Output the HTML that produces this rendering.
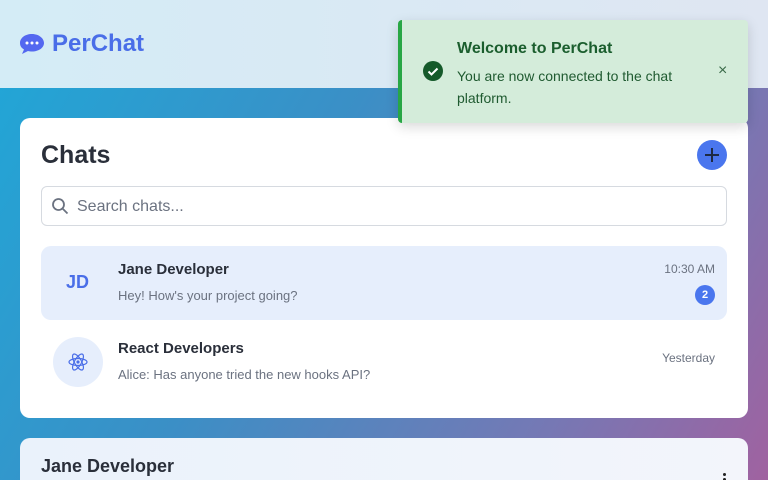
<!DOCTYPE html>
<html style="width:768px;height:480px;overflow:hidden"><head><meta charset="utf-8"><style>
*{box-sizing:border-box;margin:0;padding:0}
body{width:768px;height:480px;overflow:hidden;font-family:"Liberation Sans",sans-serif;background:linear-gradient(120deg,#1fa8d8 0%,#3b8fc6 40%,#7479b5 75%,#a062a0 100%);position:relative}
.hdr{position:absolute;left:0;top:0;width:768px;height:88px;background:linear-gradient(90deg,#d4ecf6,#dfe6f2);}
.logo{position:absolute;left:19px;top:30px;display:flex;align-items:center;color:#4a6ee8;font-weight:bold;font-size:24px}
.card{position:absolute;left:20px;top:118px;width:728px;height:300px;background:#fff;border-radius:10px}
h1{position:absolute;left:21px;top:23px;font-size:25px;color:#2a2f3a}
.plus{position:absolute;left:677px;top:22px;width:30px;height:30px;border-radius:50%;background:#4a76ee}
.search{position:absolute;left:21px;top:68px;width:686px;height:40px;border:1px solid #d6dae0;border-radius:6px;font-size:16px;color:#6b7280;padding:11px 0 0 35px}
.row{position:absolute;left:21px;width:686px;height:74px;border-radius:10px}
.nm{position:absolute;left:77px;font-weight:bold;font-size:15px;color:#2a2f3a}
.msg{position:absolute;left:77px;font-size:13px;color:#6b7280}
.tm{position:absolute;right:12px;font-size:12px;color:#6b7280}
.toast{position:absolute;left:398px;top:20px;width:350px;height:103px;background:#d4ecda;border-left:4px solid #28a745;border-radius:4px;box-shadow:0 4px 12px rgba(0,0,0,.15)}
.bot{position:absolute;left:20px;top:438px;width:728px;height:42px;background:linear-gradient(90deg,#eaf2fb,#f3f5fb);border-radius:10px 10px 0 0;overflow:hidden}
</style></head><body>
<div class="hdr"><div class="logo"><svg width="26" height="22" viewBox="0 0 26 22" style="margin-right:7px"><path d="M13 1C6 1 1 5 1 10c0 3 1.5 5 4 6.5L3 21l6-3c1.2.3 2.6.5 4 .5 7 0 12-4 12-8.5S20 1 13 1z" fill="#5468f0"/><circle cx="8" cy="10" r="1.5" fill="#fff"/><circle cx="13" cy="10" r="1.5" fill="#fff"/><circle cx="18" cy="10" r="1.5" fill="#fff"/></svg>PerChat</div></div>
<div class="card">
<h1>Chats</h1>
<div class="plus"><svg width="30" height="30"><path d="M15 8v14M8 15h14" stroke="#1d2a44" stroke-width="2"/></svg></div>
<div class="search"><svg width="18" height="18" style="position:absolute;left:9px;top:10px"><circle cx="7.5" cy="7.5" r="5.5" stroke="#6b7280" stroke-width="1.8" fill="none"/><path d="M11.5 11.5l5 5" stroke="#6b7280" stroke-width="1.8"/></svg>Search chats...</div>
<div class="row" style="top:128px;background:#e6eefc">
<div style="position:absolute;left:25px;top:26px;font-weight:bold;font-size:18px;color:#4a6ee8">JD</div>
<div class="nm" style="top:15px">Jane Developer</div>
<div class="msg" style="top:42px">Hey! How's your project going?</div>
<div class="tm" style="top:16px">10:30 AM</div>
<div style="position:absolute;right:12px;top:39px;width:20px;height:20px;border-radius:50%;background:#4a76ee;color:#fff;font-size:11px;font-weight:bold;text-align:center;line-height:20px">2</div>
</div>
<div class="row" style="top:210px">
<div style="position:absolute;left:12px;top:9px;width:50px;height:50px;border-radius:50%;background:#e6eefc"><svg width="50" height="50" viewBox="0 0 50 50"><g fill="none" stroke="#4a6ee8" stroke-width="1.2"><ellipse cx="25" cy="25" rx="9" ry="3.5"/><ellipse cx="25" cy="25" rx="9" ry="3.5" transform="rotate(60 25 25)"/><ellipse cx="25" cy="25" rx="9" ry="3.5" transform="rotate(120 25 25)"/></g><circle cx="25" cy="25" r="1.6" fill="#4a6ee8"/></svg></div>
<div class="nm" style="top:12px">React Developers</div>
<div class="msg" style="top:39px">Alice: Has anyone tried the new hooks API?</div>
<div class="tm" style="top:23px">Yesterday</div>
</div>
</div>
<div class="bot"><div style="position:absolute;left:21px;top:18px;font-weight:bold;font-size:18px;color:#2a2f3a">Jane Developer</div>
<div style="position:absolute;left:703px;top:35px;width:3px;height:3px;border-radius:50%;background:#222;box-shadow:0 5px 0 #222"></div></div>
<div class="toast">
<svg width="22" height="22" style="position:absolute;left:20px;top:40px"><circle cx="11" cy="11" r="10" fill="#155a2a"/><path d="M6.5 11.5l3 3 6-6" stroke="#fff" stroke-width="2" fill="none"/></svg>
<div style="position:absolute;left:55px;top:20px;font-weight:bold;font-size:16px;color:#1b5e2e">Welcome to PerChat</div>
<div style="position:absolute;left:55px;top:45px;width:240px;font-size:14px;line-height:22px;color:#1f5a30">You are now connected to the chat platform.</div>
<div style="position:absolute;left:316px;top:42px;font-size:16px;color:#3a6a48">×</div>
</div>
</body></html>
